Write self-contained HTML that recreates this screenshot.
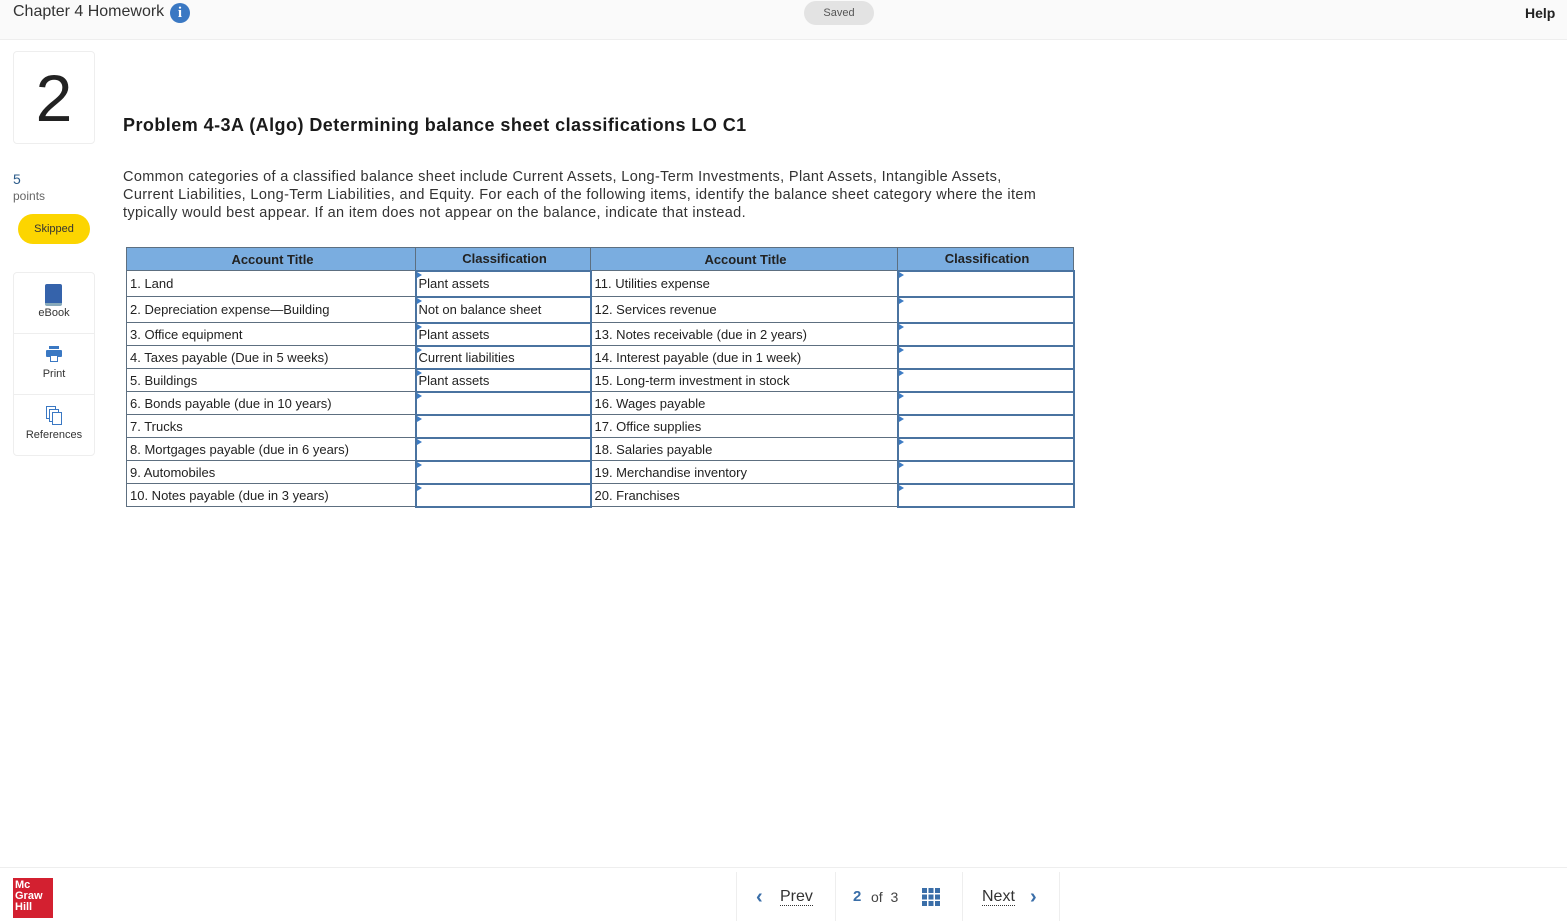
<!DOCTYPE html>
<html><head><meta charset="utf-8"><style>
*{box-sizing:border-box;margin:0;padding:0}
body{width:1567px;height:921px;background:#fff;font-family:"Liberation Sans",sans-serif;color:#222;position:relative;overflow:hidden}
.top{position:absolute;left:0;top:0;width:1567px;height:40px;background:#fafafa;border-bottom:1px solid #eee}
.abs{position:absolute}
table{position:absolute;left:126px;top:247px;border-collapse:collapse;font-size:13px;table-layout:fixed}
td,th{border:1px solid #5d6f80;padding:0 0 0 3px;white-space:nowrap;color:#222}
th{background:#7aade0;font-weight:bold;text-align:center;height:23px;border-color:#5d6f80}
td.in{border:2px solid #4a73a0;position:relative;padding-left:2px}
td.in:before{content:"";position:absolute;left:0;top:0;border-left:5px solid #3d7cc4;border-top:3px solid transparent;border-bottom:3px solid transparent}
</style></head><body>
<div class="top"></div>
<div class="abs" style="left:13px;top:3px;font-size:16px;color:#333">Chapter 4 Homework</div>
<div class="abs" style="left:170px;top:3px;width:20px;height:20px;border-radius:50%;background:#3a78c3;color:#fff;font-weight:bold;font-size:15px;text-align:center;line-height:20px;font-family:'Liberation Serif',serif">i</div>
<div class="abs" style="left:804px;top:1px;width:70px;height:24px;border-radius:12px;background:#e3e3e3;font-size:11px;color:#555;text-align:center;line-height:24px">Saved</div>
<div class="abs" style="left:1525px;top:5px;font-size:14px;font-weight:bold">Help</div>

<div class="abs" style="left:13px;top:51px;width:82px;height:93px;border:1px solid #eee;border-radius:4px;font-size:66px;text-align:center;line-height:93px;color:#222">2</div>
<div class="abs" style="left:13px;top:171px;font-size:14px;color:#2b5b8a">5</div>
<div class="abs" style="left:13px;top:189px;font-size:12px;color:#666">points</div>
<div class="abs" style="left:18px;top:214px;width:72px;height:30px;border-radius:15px;background:#fcd500;font-size:11px;text-align:center;line-height:30px;color:#333">Skipped</div>

<div class="abs" style="left:13px;top:272px;width:82px;height:184px;border:1px solid #eee;border-radius:4px"></div>
<div class="abs" style="left:13px;top:333px;width:82px;border-top:1px solid #eee"></div>
<div class="abs" style="left:13px;top:394px;width:82px;border-top:1px solid #eee"></div>
<div class="abs" style="left:45px;top:284px;width:17px;height:22px;background:#3563ab;border-radius:2px;border-bottom:3px solid #8ab"></div>
<div class="abs" style="left:13px;top:307px;width:82px;text-align:center;font-size:11px;color:#333">eBook</div>
<div class="abs" style="left:46px;top:346px;width:16px;height:16px"><div style="position:absolute;left:3px;top:0;width:10px;height:3px;background:#3a78c3"></div><div style="position:absolute;left:0;top:4px;width:16px;height:7px;background:#3a78c3;border-radius:1px"></div><div style="position:absolute;left:4px;top:9px;width:8px;height:7px;background:#fff;border:1px solid #3a78c3"></div></div>
<div class="abs" style="left:13px;top:368px;width:82px;text-align:center;font-size:11px;color:#333">Print</div>
<div class="abs" style="left:46px;top:406px;width:10px;height:13px;border:1px solid #3a78c3;background:#fff"></div>
<div class="abs" style="left:49px;top:409px;width:10px;height:13px;border:1px solid #3a78c3;background:#fff"></div>
<div class="abs" style="left:52px;top:412px;width:10px;height:13px;border:1px solid #3a78c3;background:#fff"></div>
<div class="abs" style="left:13px;top:429px;width:82px;text-align:center;font-size:11px;color:#333">References</div>

<div class="abs" style="left:123px;top:115px;font-size:18px;font-weight:bold;color:#1a1a1a;letter-spacing:0.45px">Problem 4-3A (Algo) Determining balance sheet classifications LO C1</div>
<div class="abs" style="left:123px;top:168px;white-space:nowrap;font-size:14.5px;line-height:18px;color:#333;letter-spacing:0.35px">Common categories of a classified balance sheet include Current Assets, Long-Term Investments, Plant Assets, Intangible Assets,<br>Current Liabilities, Long-Term Liabilities, and Equity. For each of the following items, identify the balance sheet category where the item<br>typically would best appear. If an item does not appear on the balance, indicate that instead.</div>

<table>
<colgroup><col style="width:289px"><col style="width:175px"><col style="width:307px"><col style="width:176px"></colgroup>
<tr><th>Account Title</th><th>Classification</th><th>Account Title</th><th>Classification</th></tr>
<tr style="height:26px"><td>1. Land</td><td class="in">Plant assets</td><td>11. Utilities expense</td><td class="in"></td></tr>
<tr style="height:26px"><td>2. Depreciation expense—Building</td><td class="in">Not on balance sheet</td><td>12. Services revenue</td><td class="in"></td></tr>
<tr style="height:23px"><td>3. Office equipment</td><td class="in">Plant assets</td><td>13. Notes receivable (due in 2 years)</td><td class="in"></td></tr>
<tr style="height:23px"><td>4. Taxes payable (Due in 5 weeks)</td><td class="in">Current liabilities</td><td>14. Interest payable (due in 1 week)</td><td class="in"></td></tr>
<tr style="height:23px"><td>5. Buildings</td><td class="in">Plant assets</td><td>15. Long-term investment in stock</td><td class="in"></td></tr>
<tr style="height:23px"><td>6. Bonds payable (due in 10 years)</td><td class="in"></td><td>16. Wages payable</td><td class="in"></td></tr>
<tr style="height:23px"><td>7. Trucks</td><td class="in"></td><td>17. Office supplies</td><td class="in"></td></tr>
<tr style="height:23px"><td>8. Mortgages payable (due in 6 years)</td><td class="in"></td><td>18. Salaries payable</td><td class="in"></td></tr>
<tr style="height:23px"><td>9. Automobiles</td><td class="in"></td><td>19. Merchandise inventory</td><td class="in"></td></tr>
<tr style="height:23px"><td>10. Notes payable (due in 3 years)</td><td class="in"></td><td>20. Franchises</td><td class="in"></td></tr>
</table>

<div class="abs" style="left:0;top:867px;width:1567px;border-top:1px solid #eee"></div>
<div class="abs" style="left:13px;top:878px;width:40px;height:40px;background:#d32030;color:#fff;font-size:11px;font-weight:bold;line-height:11px;padding:2px 0 0 2px">Mc<br>Graw<br>Hill</div>
<div class="abs" style="left:736px;top:872px;height:49px;border-left:1px solid #eee"></div>
<div class="abs" style="left:835px;top:872px;height:49px;border-left:1px solid #eee"></div>
<div class="abs" style="left:962px;top:872px;height:49px;border-left:1px solid #eee"></div>
<div class="abs" style="left:1059px;top:872px;height:49px;border-left:1px solid #eee"></div>
<div class="abs" style="left:756px;top:886px;font-size:20px;color:#3a6ea8;font-weight:bold">‹</div>
<div class="abs" style="left:780px;top:888px;font-size:16px;color:#333;border-bottom:1px dotted #333;line-height:17px">Prev</div>
<div class="abs" style="left:853px;top:888px;font-size:15px;color:#3a6ea8;font-weight:bold">2</div>
<div class="abs" style="left:871px;top:889px;font-size:14px;color:#444">of&nbsp; 3</div>
<div class="abs" style="left:922px;top:888px;width:18px;height:18px;background:repeating-linear-gradient(90deg,#3a6ea8 0 5px,transparent 5px 6.5px)"></div>
<div class="abs" style="left:922px;top:888px;width:18px;height:18px;background:repeating-linear-gradient(0deg,transparent 0 5px,#fff 5px 6.5px)"></div>
<div class="abs" style="left:982px;top:888px;font-size:16px;color:#333;border-bottom:1px dotted #333;line-height:17px">Next</div>
<div class="abs" style="left:1030px;top:886px;font-size:20px;color:#3a6ea8;font-weight:bold">›</div>
</body></html>
